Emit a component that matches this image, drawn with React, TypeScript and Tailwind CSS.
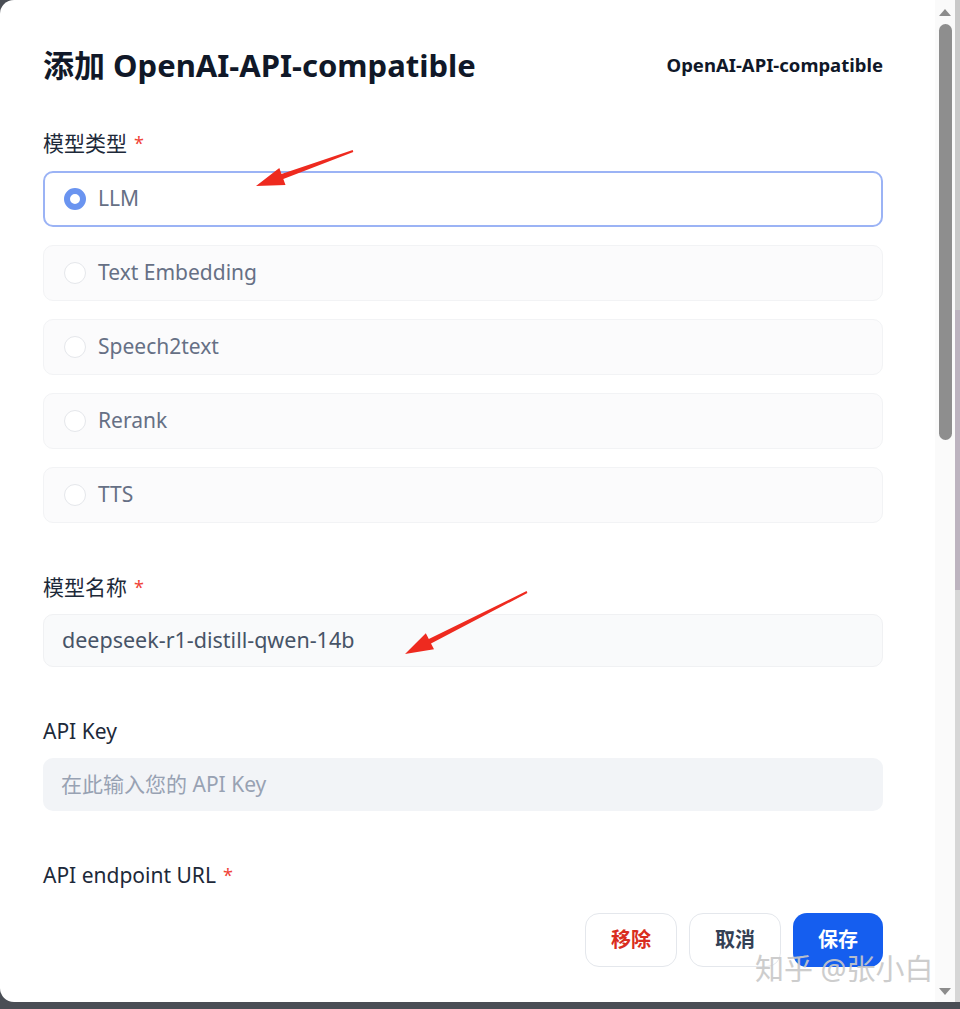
import React from 'react';

const FONT = '"Noto Sans", "Noto Sans CJK SC", sans-serif';

const modelTypes = ['LLM', 'Text Embedding', 'Speech2text', 'Rerank', 'TTS'];

const Label: React.FC<{ text: string; required?: boolean }> = ({ text, required }) => (
  <div className="h-[28px] flex items-center text-[21px] text-[#1d2939] leading-[28px]">
    {text}
    {required && <span className="ml-[7px] text-[#f04438] text-[18px]">*</span>}
  </div>
);

const Arrows: React.FC = () => (
  <svg className="absolute left-0 top-0 pointer-events-none" width="960" height="1009">
    {/* annotation arrow: model type */}
    <polygon
      fill="#ee2a1f"
      points="256,186 279.3,168 281.5,174.1 352.7,150 353.3,152 283.3,178.9 285.5,185"
    />
    {/* annotation arrow: model name */}
    <polygon
      fill="#ee2a1f"
      points="405,654 425.8,633.3 428.8,639.1 526.6,591 527.4,593 431,643.5 434,649.3"
    />
  </svg>
);

export default function App() {
  return (
    <div
      className="relative w-[960px] h-[1009px] bg-[#4a4e55] overflow-hidden flex flex-col"
      style={{ fontFamily: FONT }}
    >
      <div className="flex h-[1002px]">
        {/* Modal */}
        <div className="w-[935px] h-full bg-white rounded-l-[14px] px-[43px] pt-[47px] flex flex-col">
          <div className="w-[840px] flex items-center justify-between h-[36px]">
            <h2 className="text-[31px] font-bold text-[#101828] leading-[36px]">添加 OpenAI-API-compatible</h2>
            <span className="text-[18.5px] font-bold text-[#101828]">OpenAI-API-compatible</span>
          </div>

          <div className="mt-[46px]">
            <Label text="模型类型" required />
          </div>
          <div className="mt-[14px] w-[840px] flex flex-col gap-[18px]">
            {modelTypes.map((t, i) => {
              const active = i === 0;
              return (
                <div
                  key={t}
                  className={
                    active
                      ? 'h-[56px] rounded-[10px] border-2 border-[#9bb3f5] bg-white flex items-center px-[19px] gap-[12px]'
                      : 'h-[56px] rounded-[10px] border border-[#f2f3f5] bg-[#fbfbfc] flex items-center px-[20px] gap-[12px]'
                  }
                >
                  {active ? (
                    <span className="w-[22px] h-[22px] rounded-full border-[6px] border-[#6a94f0] bg-white" />
                  ) : (
                    <span className="w-[22px] h-[22px] rounded-full border border-[#e5e7eb] bg-white" />
                  )}
                  <span className="text-[21px] text-[#667085]">{t}</span>
                </div>
              );
            })}
          </div>

          <div className="mt-[50px]">
            <Label text="模型名称" required />
          </div>
          <div className="mt-[13px] w-[840px] h-[53px] rounded-[10px] border border-[#f0f1f3] bg-[#f9fafb] flex items-center px-[18px] text-[21.5px] text-[#475467]">
            deepseek-r1-distill-qwen-14b
          </div>

          <div className="mt-[50px]">
            <Label text="API Key" />
          </div>
          <div className="mt-[13px] w-[840px] h-[53px] rounded-[10px] bg-[#f2f4f7] flex items-center px-[18px] text-[21px] text-[#98a2b3]">
            在此输入您的 API Key
          </div>

          <div className="mt-[50px]">
            <Label text="API endpoint URL" required />
          </div>

          <div className="mt-[24px] w-[840px] flex justify-end gap-[12px]">
            <button className="w-[92px] h-[54px] rounded-[14px] border border-[#e4e7ec] bg-white text-[20px] font-bold text-[#d92d20]">
              移除
            </button>
            <button className="w-[92px] h-[54px] rounded-[14px] border border-[#e4e7ec] bg-white text-[20px] font-bold text-[#344054]">
              取消
            </button>
            <button className="w-[90px] h-[54px] rounded-[14px] bg-[#155eef] text-[20px] font-bold text-white">
              保存
            </button>
          </div>
        </div>

        {/* Scrollbar */}
        <div className="w-[20px] h-full bg-[#fafafa] flex flex-col items-center">
          <div className="h-[24px] flex items-center justify-center">
            <span className="w-0 h-0 border-l-[6px] border-r-[6px] border-b-[7px] border-l-transparent border-r-transparent border-b-[#8c8c8c]" />
          </div>
          <div className="w-[13px] h-[416px] rounded-full bg-[#8e8e8e]" />
          <div className="flex-1" />
          <div className="h-[22px] flex items-center justify-center">
            <span className="w-0 h-0 border-l-[6px] border-r-[6px] border-t-[7px] border-l-transparent border-r-transparent border-t-[#8c8c8c]" />
          </div>
        </div>

        {/* Page behind */}
        <div className="w-[5px] h-full flex flex-col">
          <div className="h-[310px] bg-[#c9c9c9]" />
          <div className="h-[280px] bg-[#bcb3bf]" />
          <div className="flex-1 bg-[#d6d6d6]" />
        </div>
      </div>
      <div className="flex-1 bg-[#4a4e55]" />

      <Arrows />

      <div className="absolute left-[755px] top-[951px] text-[29px] leading-[36px] text-[#c8c8c8] opacity-90">
        知乎 @张小白
      </div>
    </div>
  );
}
